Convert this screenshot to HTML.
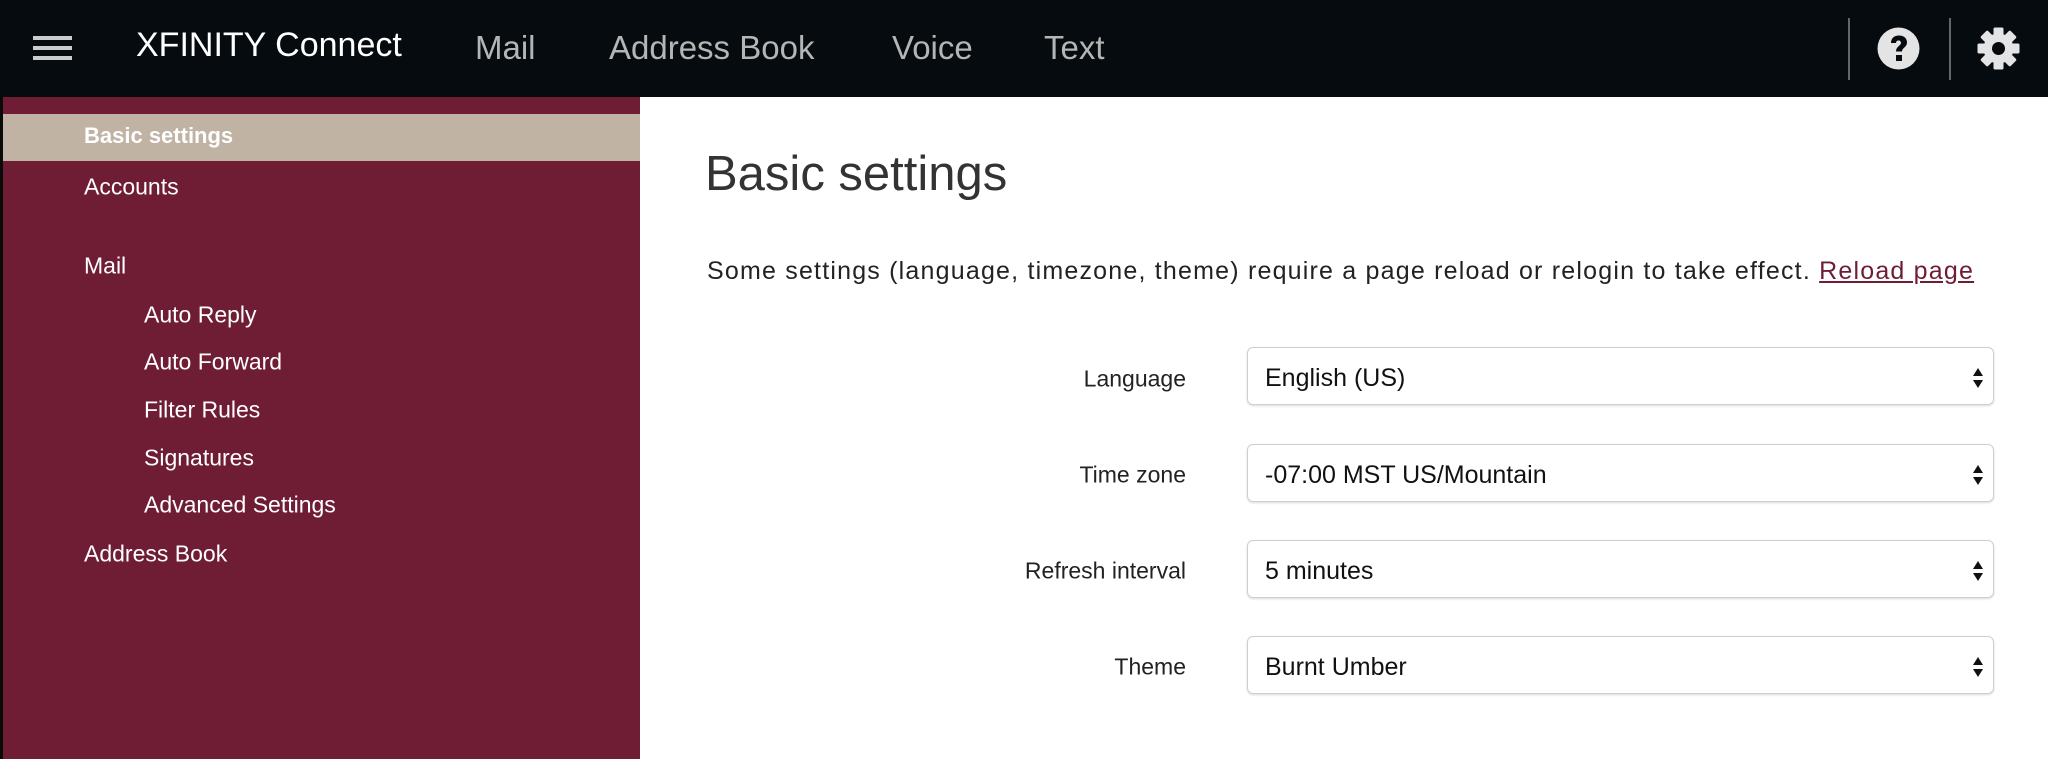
<!DOCTYPE html>
<html><head><meta charset="utf-8"><style>
*{margin:0;padding:0;box-sizing:border-box}
body{width:2048px;height:759px;overflow:hidden;background:#fff;font-family:"Liberation Sans",sans-serif;position:relative}
.hdr{position:absolute;left:0;top:0;width:2048px;height:97px;background:#050b0f}
.t{position:absolute;white-space:nowrap}
.side{position:absolute;left:3px;top:97px;width:637px;height:662px;background:#6e1d35}
.lb{position:absolute;left:0;top:97px;width:3px;height:662px;background:#0a0a0a}
.hl{position:absolute;left:3px;top:114px;width:637px;height:47px;background:#c0b3a3}
.si{position:absolute;color:#fff;font-size:23px;white-space:nowrap;transform:translateY(-50%)}
.lab{position:absolute;right:862px;font-size:23px;color:#222;transform:translateY(-50%)}
.sel{position:absolute;left:1247px;width:747px;height:58px;border:1px solid #cfcfcf;border-radius:6px;box-shadow:0 1px 2px rgba(0,0,0,.15);font-size:25px;color:#111;padding-left:17px;line-height:60px}
.sel svg{position:absolute;right:9px;top:19px}
</style></head><body>
<div class="hdr"></div>
<div style="position:absolute;left:33px;top:36px;width:39px;height:4px;background:#ccc"></div>
<div style="position:absolute;left:33px;top:46px;width:39px;height:4px;background:#ccc"></div>
<div style="position:absolute;left:33px;top:56px;width:39px;height:4px;background:#ccc"></div>
<div class="t" style="left:136px;top:26px;font-size:34px;color:#fff">XFINITY Connect</div>
<div class="t" style="left:475px;top:29px;font-size:33px;color:#b5b5b5">Mail</div>
<div class="t" style="left:609px;top:29px;font-size:33px;color:#b5b5b5">Address Book</div>
<div class="t" style="left:892px;top:29px;font-size:33px;color:#b5b5b5">Voice</div>
<div class="t" style="left:1044px;top:29px;font-size:33px;color:#b5b5b5">Text</div>
<div style="position:absolute;left:1848px;top:18px;width:2px;height:62px;background:#666"></div>
<div style="position:absolute;left:1949px;top:18px;width:2px;height:62px;background:#666"></div>
<svg style="position:absolute;left:1877px;top:27px" width="43" height="43" viewBox="0 0 43 43"><circle cx="21.5" cy="21.5" r="21" fill="#e4e4e4"/><path d="M14 16c0-5 3.5-7.5 8-7.5s8 2.5 8 7c0 4.5-5 5.5-5 9h-6c0-5 5-6 5-8.5 0-1.5-1-2.5-2.5-2.5S19 14.5 19 16z" fill="#050b0f"/><rect x="19" y="28" width="6" height="6" fill="#050b0f"/></svg>
<svg style="position:absolute;left:1977px;top:27px" width="43" height="43" viewBox="-21.5 -21.5 43 43"><g fill="#e4e4e4"><circle r="15"/><g id="th"><rect x="-5" y="-21" width="10" height="42" rx="1.5"/></g><use href="#th" transform="rotate(45)"/><use href="#th" transform="rotate(90)"/><use href="#th" transform="rotate(135)"/></g><circle r="6.5" fill="#050b0f"/></svg>
<div class="lb"></div>
<div class="side"></div>
<div class="hl"></div>
<div class="si" style="left:84px;top:136px;font-weight:bold;font-size:22px">Basic settings</div>
<div class="si" style="left:84px;top:187px">Accounts</div>
<div class="si" style="left:84px;top:266px">Mail</div>
<div class="si" style="left:144px;top:315px">Auto Reply</div>
<div class="si" style="left:144px;top:362px">Auto Forward</div>
<div class="si" style="left:144px;top:410px">Filter Rules</div>
<div class="si" style="left:144px;top:458px">Signatures</div>
<div class="si" style="left:144px;top:505px">Advanced Settings</div>
<div class="si" style="left:84px;top:554px">Address Book</div>
<div class="t" style="left:705px;top:146px;font-size:49px;font-weight:300;color:#333">Basic settings</div>
<div class="t" style="left:707px;top:257px;font-size:25px;color:#222;letter-spacing:1.2px">Some settings (language, timezone, theme) require a page reload or relogin to take effect. <span style="color:#6e1d35;text-decoration:underline">Reload page</span></div>
<div class="lab" style="top:379px">Language</div>
<div class="lab" style="top:475px">Time zone</div>
<div class="lab" style="top:571px">Refresh interval</div>
<div class="lab" style="top:667px">Theme</div>
<div class="sel" style="top:347px">English (US)<svg width="12" height="22" viewBox="0 0 12 22"><path d="M6 1L11 9H1zM6 21L1 13H11z" fill="#111"/></svg></div>
<div class="sel" style="top:444px">-07:00 MST US/Mountain<svg width="12" height="22" viewBox="0 0 12 22"><path d="M6 1L11 9H1zM6 21L1 13H11z" fill="#111"/></svg></div>
<div class="sel" style="top:540px">5 minutes<svg width="12" height="22" viewBox="0 0 12 22"><path d="M6 1L11 9H1zM6 21L1 13H11z" fill="#111"/></svg></div>
<div class="sel" style="top:636px">Burnt Umber<svg width="12" height="22" viewBox="0 0 12 22"><path d="M6 1L11 9H1zM6 21L1 13H11z" fill="#111"/></svg></div>
</body></html>
